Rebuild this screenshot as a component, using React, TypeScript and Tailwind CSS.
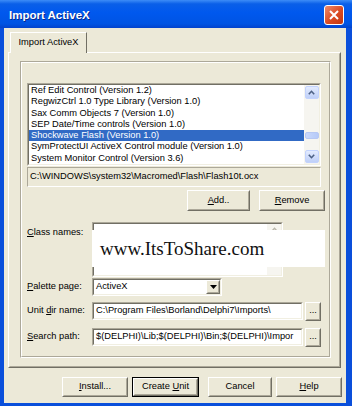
import type { ReactNode } from "react";

const items = [
  "Ref Edit Control (Version 1.2)",
  "RegwizCtrl 1.0 Type Library (Version 1.0)",
  "Sax Comm Objects 7 (Version 1.0)",
  "SEP Date/Time controls (Version 1.0)",
  "Shockwave Flash (Version 1.0)",
  "SymProtectUI ActiveX Control module (Version 1.0)",
  "System Monitor Control (Version 3.6)",
];

function Btn({ className, children }: { className: string; children: ReactNode }) {
  return (
    <div
      className={`${className} border border-t-white border-l-white border-b-[#716F64] border-r-[#716F64] bg-[#ECE9D8]`}
    >
      <div className="flex h-full w-full items-center justify-center border border-transparent border-b-[#ACA899] border-r-[#ACA899] text-black">
        {children}
      </div>
    </div>
  );
}

function Sunken({ className, children }: { className: string; children?: ReactNode }) {
  return (
    <div
      className={`${className} border border-t-[#ACA899] border-l-[#ACA899] border-b-white border-r-white`}
    >
      <div className="flex h-full w-full items-center overflow-hidden whitespace-nowrap border border-t-[#716F64] border-l-[#716F64] border-b-[#F1EFE2] border-r-[#F1EFE2] bg-white pl-[2px] text-black">
        {children}
      </div>
    </div>
  );
}

function ScrollBtn({ up }: { up: boolean }) {
  return (
    <div className="flex h-[13px] w-[14px] items-center justify-center rounded-[2px] border border-[#C3D3FD] bg-[linear-gradient(180deg,#E3EBFE,#BFD0F8)]">
      <svg width="7" height="5" viewBox="0 0 7 5">
        <path
          d={up ? "M0.8 4.2L3.5 1.3L6.2 4.2" : "M0.8 0.8L3.5 3.7L6.2 0.8"}
          stroke="#4D6185"
          strokeWidth="1.6"
          fill="none"
        />
      </svg>
    </div>
  );
}

export default function App() {
  return (
    <div className="flex h-[406px] w-[352px] flex-col bg-[#0A4FDB] font-['Liberation_Sans',Arial,sans-serif] text-[9.3px] leading-none">
      {/* title bar */}
      <div className="flex h-[28px] items-center justify-between bg-[linear-gradient(180deg,#3D8CF7_0%,#0A5FE8_14%,#0058EE_45%,#0054E3_85%,#0343CC_100%)] pl-[9px] pr-[8px]">
        <span className="pt-[3px] text-[11.5px] font-bold text-white [text-shadow:1px_1px_0_#0A2A8A]">
          Import ActiveX
        </span>
        <div className="mt-[2px] flex h-[20px] w-[20px] items-center justify-center rounded-[3px] border border-white bg-[linear-gradient(135deg,#EE8B6C,#DA4A22_55%,#C2360F)]">
          <svg width="10" height="10" viewBox="0 0 10 10">
            <path d="M1 1L9 9M9 1L1 9" stroke="white" strokeWidth="2" />
          </svg>
        </div>
      </div>

      {/* client */}
      <div className="mb-[3px] ml-[4px] mr-[6px] flex flex-1 flex-col bg-[#ECE9D8] text-black">
        {/* tab header */}
        <div className="relative z-10 -mb-px ml-[6px] mt-[4px] flex h-[21px] w-[77px] items-center justify-center border border-b-0 border-l-white border-t-white border-r-[#716F64] bg-[#ECE9D8] pb-[1px]">
          Import ActiveX
        </div>

        {/* tab page */}
        <div className="ml-[4px] h-[316px] w-[333px] border border-t-white border-l-white border-b-[#716F64] border-r-[#716F64]">
          <div className="h-full w-full border border-transparent border-b-[#ACA899] border-r-[#ACA899] pl-[10px] pt-[7px]">
            {/* group box */}
            <div className="h-[297px] w-[311px] border border-t-[#ACA899] border-l-[#ACA899] border-b-white border-r-white">
              <div className="flex h-full w-full flex-col border border-t-white border-l-white border-b-[#ACA899] border-r-[#ACA899] pl-[5px] pt-[20px]">
                {/* list */}
                <div className="h-[83px] w-[294px] border border-t-[#ACA899] border-l-[#ACA899] border-b-white border-r-white">
                  <div className="flex h-full w-full border border-t-[#716F64] border-l-[#716F64] border-b-[#F1EFE2] border-r-[#F1EFE2] bg-white">
                    <div className="flex flex-1 flex-col">
                      {items.map((it) => (
                        <div
                          key={it}
                          className={`flex h-[11.4px] items-center whitespace-nowrap pl-[2px] ${
                            it.startsWith("Shockwave") ? "bg-[#316AC5] text-white" : "text-black"
                          }`}
                        >
                          {it}
                        </div>
                      ))}
                    </div>
                    <div className="flex w-[15px] flex-col items-center justify-between bg-[#F6F5F0] py-[1px]">
                      <ScrollBtn up />
                      <div className="mt-[33px] h-[7px] w-[14px] rounded-[2px] border border-[#B7C8F3] bg-[linear-gradient(90deg,#C9D8FC,#B6CAF8)]" />
                      <div className="flex-1" />
                      <ScrollBtn up={false} />
                    </div>
                  </div>
                </div>

                {/* file path */}
                <div className="mt-[1px] flex h-[20px] w-[294px] items-center border border-t-[#ACA899] border-l-[#ACA899] border-b-white border-r-white pl-[2px]">
                  C:\WINDOWS\system32\Macromed\Flash\Flash10t.ocx
                </div>

                {/* add / remove */}
                <div className="mt-[3px] flex h-[21px]">
                  <Btn className="ml-[160px] w-[63px]">
                    <span>
                      <span className="underline">A</span>dd..
                    </span>
                  </Btn>
                  <Btn className="ml-[9px] w-[66px]">
                    <span>
                      <span className="underline">R</span>emove
                    </span>
                  </Btn>
                </div>

                {/* class names */}
                <div className="mt-[11px] flex">
                  <div className="w-[65px] pt-[6px]">
                    <span className="underline">C</span>lass names:
                  </div>
                  <div className="relative">
                    <div className="h-[55px] w-[191px] border border-t-[#ACA899] border-l-[#ACA899] border-b-white border-r-white">
                      <div className="flex h-full w-full justify-end border border-t-[#716F64] border-l-[#716F64] border-b-[#F1EFE2] border-r-[#F1EFE2] bg-white">
                        <div className="flex w-[14px] flex-col items-center bg-[#F6F5F0]">
                          <svg width="7" height="5" viewBox="0 0 7 5" className="mt-[3px]">
                            <path d="M0.8 4.2L3.5 1.3L6.2 4.2" stroke="#B9B6AA" strokeWidth="1.4" fill="none" />
                          </svg>
                        </div>
                      </div>
                    </div>
                    {/* watermark over the memo */}
                    <div className="absolute left-0 top-[8px] z-10 flex h-[37px] w-[233px] items-center bg-white pl-[8px] font-['Liberation_Serif','Times_New_Roman',serif] text-[19px] text-[#111]">
                      www.ItsToShare.com
                    </div>
                  </div>
                </div>

                {/* palette page */}
                <div className="mt-[1px] flex h-[18px] items-center">
                  <div className="w-[65px]">
                    <span className="underline">P</span>alette page:
                  </div>
                  <div className="h-[18px] w-[130px] border border-t-[#ACA899] border-l-[#ACA899] border-b-white border-r-white">
                    <div className="flex h-full w-full items-center border border-t-[#716F64] border-l-[#716F64] border-b-[#F1EFE2] border-r-[#F1EFE2] bg-white pl-[2px]">
                      <span className="flex-1">ActiveX</span>
                      <Btn className="h-full w-[14px]">
                        <svg width="7" height="4" viewBox="0 0 7 4">
                          <path d="M0 0H7L3.5 4Z" fill="black" />
                        </svg>
                      </Btn>
                    </div>
                  </div>
                </div>

                {/* unit dir name */}
                <div className="mt-[6px] flex h-[18px] items-center">
                  <div className="w-[65px]">
                    Unit <span className="underline">d</span>ir name:
                  </div>
                  <Sunken className="h-[18px] w-[211px]">C:\Program Files\Borland\Delphi7\Imports\</Sunken>
                  <Btn className="ml-[2px] h-[19px] w-[16px]">...</Btn>
                </div>

                {/* search path */}
                <div className="mt-[8px] flex h-[18px] items-center">
                  <div className="w-[65px]">
                    <span className="underline">S</span>earch path:
                  </div>
                  <Sunken className="h-[18px] w-[211px]">$(DELPHI)\Lib;$(DELPHI)\Bin;$(DELPHI)\Impor</Sunken>
                  <Btn className="ml-[2px] h-[19px] w-[16px]">...</Btn>
                </div>
              </div>
            </div>
          </div>
        </div>

        {/* bottom buttons */}
        <div className="ml-[58px] mt-[9px] flex h-[20px]">
          <Btn className="w-[66px]">
            <span>
              <span className="underline">I</span>nstall...
            </span>
          </Btn>
          <div className="ml-[4px] w-[67px] border border-black">
            <Btn className="h-full w-full">
              <span>
                Create <span className="underline">U</span>nit
              </span>
            </Btn>
          </div>
          <Btn className="ml-[9px] w-[64px]">Cancel</Btn>
          <Btn className="ml-[4px] w-[66px]">
            <span>
              <span className="underline">H</span>elp
            </span>
          </Btn>
        </div>
      </div>
    </div>
  );
}
